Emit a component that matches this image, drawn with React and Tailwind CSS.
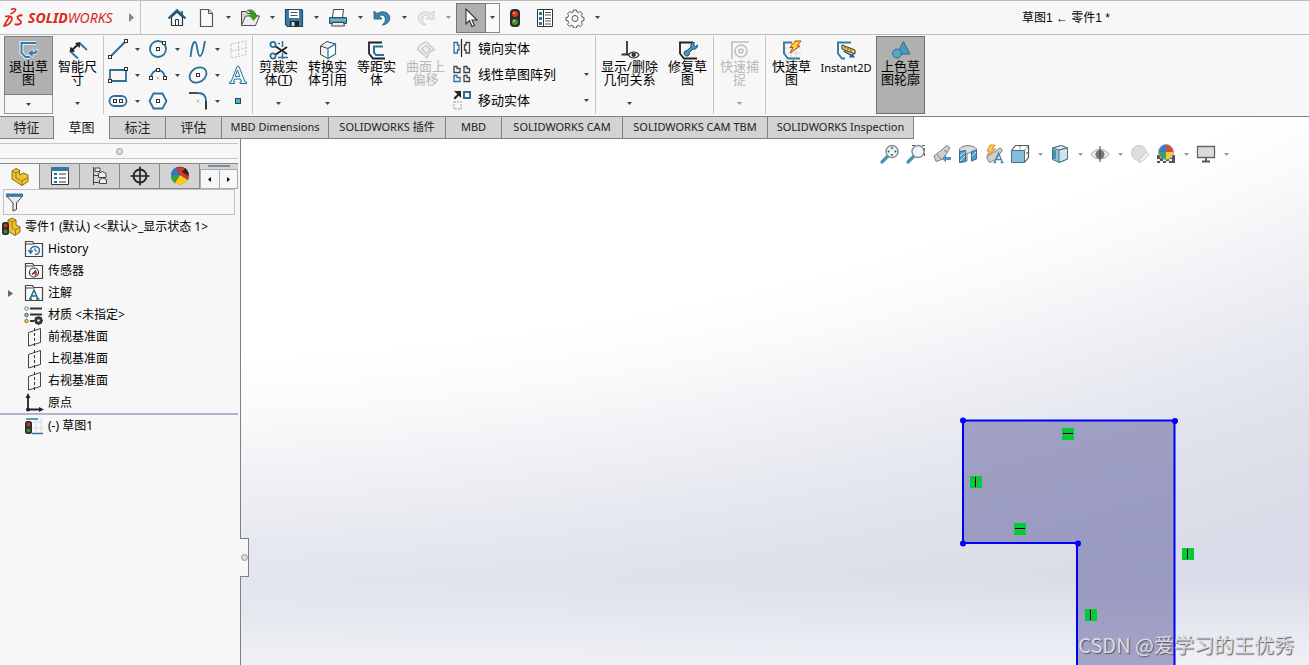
import React from "react";

const BLUE = "#2a7299";
const DARK = "#333333";

function Svg({ w = 20, h = 20, box, children, className = "" }) {
  return (
    <svg
      width={w}
      height={h}
      viewBox={box || `0 0 ${w} ${h}`}
      fill="none"
      aria-hidden="true"
      className={"block shrink-0 " + className}
    >
      {children}
    </svg>
  );
}

function Caret({ color = "#444" }) {
  return (
    <Svg w={5} h={3}>
      <path d="M0 0h5L2.5 3z" fill={color} />
    </Svg>
  );
}

/* small square grip drawn on sketch entities */
function Grip({ x, y }) {
  return <rect x={x - 1.5} y={y - 1.5} width="3" height="3" fill="#fff" stroke={DARK} />;
}

/* ---------- quick access icons ---------- */
const HomeIcon = () => (
  <Svg>
    <path d="M4.500 9v8.500h11V9L10 4z" fill="#f4f8fa" stroke={DARK} strokeWidth="1.200" />
    <path d="M14 3h2v4h-2z" fill={BLUE} />
    <path d="M1.500 10.500L10 2.500l8.500 8" stroke="#1f5f85" strokeWidth="2.400" />
    <path d="M8.500 11.500h3v6h-3z" fill="#fff" stroke={DARK} />
  </Svg>
);
const NewIcon = () => (
  <Svg>
    <path d="M4.500 1.500h8l4 4v13h-12z" fill="#fbfbfb" stroke="#555" strokeWidth="1.200" strokeLinejoin="round" />
    <path d="M12.500 1.500v4h4" fill="#ddd" stroke="#555" />
  </Svg>
);
const OpenIcon = () => (
  <Svg>
    <path d="M1.500 3.500h5l1 2h8v12h-14z" fill="#d8d8d8" stroke="#444" />
    <path d="M1.500 17.500l4-9.500h14l-4 9.500z" fill="#eee" stroke="#555" />
    <path d="M7 2.500c4-2 8 0 8.500 4.500H18l-4.500 5.500L9 7h2.500c-.5-2.500-2-3.500-4.500-4.500z" fill="#3c9a1b" stroke="#2a7a10" strokeWidth=".5" />
  </Svg>
);
const SaveIcon = () => (
  <Svg>
    <path d="M1.500 1.500h16l1 1v16h-15l-2-2z" fill="#3a7da3" stroke="#1d4c66" strokeWidth="1.200" />
    <path d="M5 2h10v8H5z" fill="#fff" />
    <path d="M6.500 4.500h7M6.500 7.500h7" stroke="#555" />
    <path d="M6 13h9v5.500H6z" fill="#222" />
    <path d="M7.500 14h3v4h-3z" fill="#cfe0ea" />
  </Svg>
);
const PrintIcon = () => (
  <Svg>
    <path d="M5.500 1.500h10l-1 8h-10z" fill="#fff" stroke="#444" />
    <path d="M1.500 9.500h17v6h-17z" fill="#4b91b6" stroke="#28546d" />
    <path d="M2 12h16" stroke="#a9cfe1" />
    <path d="M4.500 14.500h11l1 3.500h-13z" fill="#eee" stroke="#444" />
  </Svg>
);
const UndoIcon = () => (
  <Svg>
    <path d="M2 3v8h8L7.200 8C10 6 13.800 7.500 13.300 12c-.2 2-1.500 3.500-3 5 4.500-.5 7.200-3 7.500-6.500C18.300 5 11 1.500 5 5.500z" fill="#3b86ae" stroke="#1f5875" strokeWidth=".8" />
  </Svg>
);
const RedoIcon = () => (
  <Svg>
    <path d="M18 3v8h-8l2.800-3C10 6 6.200 7.500 6.700 12c.2 2 1.500 3.500 3 5-4.500-.5-7.200-3-7.500-6.500C1.700 5 9 1.500 15 5.500z" fill="#e8e8e8" stroke="#c4c4c4" strokeWidth=".8" />
  </Svg>
);
const CursorIcon = () => (
  <Svg>
    <path d="M5 1v15l3.500-3.500 2.500 6 2.500-1-2.500-5.500h5z" fill="#fff" stroke="#333" strokeWidth="1.100" />
  </Svg>
);
const TrafficIcon = () => (
  <Svg>
    <rect x="5" y="1" width="10" height="18" rx="4" fill="#2c2c2c" />
    <circle cx="10" cy="6" r="3" fill="#d63a22" />
    <circle cx="10" cy="14" r="3" fill="#3f9a28" />
    <circle cx="9" cy="5" r="1" fill="#ff9a80" />
    <circle cx="9" cy="13" r="1" fill="#9be080" />
  </Svg>
);
const OptionsIcon = () => (
  <Svg>
    <path d="M2.500 1.500h15v17h-15z" fill="#fff" stroke="#333" />
    <path d="M8.500 1.500v17" stroke="#333" />
    <path d="M4 4h3v3H4zM4 9h3v3H4zM4 14h3v3H4z" fill={BLUE} />
    <path d="M10 4.500h6M10 7h6M10 10.500h6M10 13h6M10 16h6" stroke="#555" />
  </Svg>
);
const GearIcon = () => (
  <Svg>
    <path
      d="M8.500 2h3l.4 2 1.700.7 1.700-1.200 2.200 2.200-1.200 1.700.7 1.700 2 .4v3l-2 .4-.7 1.700 1.200 1.700-2.200 2.200-1.700-1.200-1.700.7-.4 2h-3l-.4-2-1.700-.7-1.700 1.200-2.200-2.200 1.200-1.700-.7-1.700-2-.4v-3l2-.4.7-1.700-1.200-1.700 2.200-2.200 1.700 1.200 1.700-.7z"
      fill="#fafafa"
      stroke="#555"
      strokeLinejoin="round"
    />
    <circle cx="10" cy="10.500" r="3" stroke="#555" />
  </Svg>
);

/* ---------- ribbon icons ---------- */
const ExitSketchIcon = () => (
  <Svg>
    <path d="M17 3H2.500v10l4 4h4" stroke="#dff1fb" strokeWidth="4" />
    <path d="M17 3H2.500v10l4 4h4" stroke="#2f7ca5" strokeWidth="1.800" />
    <path d="M19 9.500c0 4-2 5-5 5v3L8.500 13 14 9v2.500c2 0 3-.5 3-2z" fill="#2f7ca5" stroke="#e8f6fc" strokeWidth=".8" />
  </Svg>
);
const SmartDimIcon = () => (
  <Svg>
    <path d="M3.500 10.500L10 4.500" stroke="#222" strokeWidth="2" />
    <path d="M1.500 12.500l1-6 4.500 5zM12.500 2l-1 6-4.500-5z" fill="#222" />
    <path d="M12 3.500l7 6.500M3 12l7 6.500" stroke={BLUE} strokeWidth="1.800" />
  </Svg>
);
const LineIcon = () => (
  <Svg>
    <path d="M2 18L18 2" stroke={BLUE} strokeWidth="2.200" />
    <Grip x={2} y={18} />
    <Grip x={18} y={2} />
  </Svg>
);
const CircleIcon = () => (
  <Svg>
    <circle cx="10" cy="10" r="8" stroke={BLUE} strokeWidth="1.800" />
    <Grip x={10} y={10} />
    <Grip x={16} y={4} />
  </Svg>
);
const SplineIcon = () => (
  <Svg>
    <path d="M2.500 18c1-8 2-15 4.500-15s2 14 5 14S15.500 8 17 2" stroke={BLUE} strokeWidth="1.800" />
  </Svg>
);
const PlaneIcon = () => (
  <Svg>
    <path d="M3 5l15-3v14L3 19zM10.500 3.500v14M3 12l15-3" stroke="#bdbdbd" strokeDasharray="2 1.500" />
  </Svg>
);
const RectIcon = () => (
  <Svg>
    <path d="M2 5h16v11H2z" stroke={BLUE} strokeWidth="1.800" />
    <Grip x={2} y={16} />
    <Grip x={18} y={4} />
  </Svg>
);
const ArcIcon = () => (
  <Svg>
    <path d="M3 13A7 8 0 0117 13" stroke={BLUE} strokeWidth="1.800" />
    <path d="M8.500 11.500l3 3M11.500 11.500l-3 3" stroke="#bbb" />
    <Grip x={3} y={13} />
    <Grip x={17} y={13} />
    <Grip x={10} y={5} />
  </Svg>
);
const EllipseIcon = () => (
  <Svg>
    <ellipse cx="10" cy="10" rx="9" ry="7" transform="rotate(-35 10 10)" stroke={BLUE} strokeWidth="1.800" />
    <Grip x={10} y={10} />
  </Svg>
);
const TextToolIcon = () => (
  <Svg>
    <path d="M1.500 18.500h5v-1.500H5.500l1-3h6l1 3H12v1.500h6.500V17h-1.500L11 1.500H9L3 17H1.500zM7.200 11.500L9.500 5l2.300 6.500z" fill="#f2f8fb" stroke={BLUE} strokeWidth="1" />
  </Svg>
);
const SlotIcon = () => (
  <Svg>
    <rect x="1.500" y="5" width="17" height="10" rx="5" stroke={BLUE} strokeWidth="1.800" />
    <Grip x={7} y={10} />
    <Grip x={13} y={10} />
  </Svg>
);
const PolygonIcon = () => (
  <Svg>
    <path d="M5.500 2.500h9L18.500 10l-4 7.500h-9L1.500 10z" stroke={BLUE} strokeWidth="1.800" />
    <Grip x={10} y={10} />
  </Svg>
);
const FilletIcon = () => (
  <Svg>
    <path d="M1 2h9" stroke="#222" strokeWidth="1.600" />
    <path d="M10 2c5 0 8 3 8 8" stroke={BLUE} strokeWidth="1.800" />
    <path d="M18 10v8.500" stroke="#222" strokeWidth="1.800" />
    <path d="M8.500 8.500l3 3M11.500 8.500l-3 3" stroke="#bbb" />
  </Svg>
);
const PointIcon = () => (
  <Svg>
    <rect x="7.500" y="7.500" width="5" height="5" fill="#5aa9d0" stroke="#1d4c66" />
  </Svg>
);
const TrimIcon = () => (
  <Svg>
    <path d="M6 6l12 8M6 15L18 7" stroke="#222" strokeWidth="2" />
    <circle cx="4" cy="4.500" r="2.600" stroke={BLUE} strokeWidth="1.800" />
    <circle cx="4" cy="16" r="2.600" stroke={BLUE} strokeWidth="1.800" />
    <path d="M13.500 1v6M13.500 13v6M9 17.500h10M9 3.500h2" stroke={BLUE} strokeWidth="1.600" />
  </Svg>
);
const ConvertIcon = () => (
  <Svg>
    <path d="M2.500 6L9 1.500 17.500 4v10L10 18.500l-7.500-4z" fill="#f2f2f2" stroke="#444" />
    <path d="M2.500 6L10 8.500 17.500 4" stroke="#444" />
    <path d="M10 8.500v10l7.500-4.500V4z" fill="#fff" stroke={BLUE} strokeWidth="1.200" />
  </Svg>
);
const OffsetIcon = () => (
  <Svg>
    <path d="M15 2.500H2v11l4 5h12" stroke="#222" strokeWidth="1.800" />
    <path d="M16 6.500H7v6l2 2.500h8" stroke={BLUE} strokeWidth="2" />
  </Svg>
);
const SurfaceOffsetIcon = () => (
  <Svg>
    <path d="M1.500 9C4 4 8 2 11 2l7.500 8c-4 1-6 3.500-7.500 8z" fill="#ededed" stroke="#c6c6c6" strokeWidth="1.200" />
    <path d="M6 9c1-2 2.500-3 4.500-3.500L14.500 10c-2 .6-3 1.800-4 4z" stroke="#c6c6c6" strokeWidth="1.200" />
  </Svg>
);
const MirrorIcon = () => (
  <Svg>
    <path d="M2 4.500h3.500v2.500H7v5H5.500v3H2z" stroke={BLUE} strokeWidth="1.300" />
    <path d="M9.500 1v18" stroke="#222" strokeWidth="1.200" />
    <path d="M17.500 4.500H14v2.500h-1.500v5H14v3h3.500z" stroke="#444" strokeWidth="1.300" />
  </Svg>
);
const PatternIcon = () => (
  <Svg>
    <path d="M2 2.500h3v2h3v4H2z" stroke="#444" strokeWidth="1.300" />
    <path d="M12 2.500h3v2h2.500v4H12z" stroke="#444" strokeWidth="1.300" />
    <path d="M2 11.500h3v2h3v4H2z" stroke={BLUE} strokeWidth="1.300" />
    <path d="M12 11.500h3v2h2.500v4H12z" stroke="#444" strokeWidth="1.300" />
  </Svg>
);
const MoveIcon = () => (
  <Svg>
    <path d="M2 1h7v7L6.800 5.800 3 9.500 1.500 8l3.800-3.700z" fill="#222" />
    <rect x="12" y="2" width="6" height="6" stroke={BLUE} strokeWidth="2" />
    <path d="M2 12h7v7H2z" stroke="#bbb" strokeWidth="1.500" strokeDasharray="2 1" />
  </Svg>
);
const RelationsIcon = () => (
  <Svg>
    <path d="M7 1v13M1.500 14.500H10" stroke="#333" strokeWidth="1.800" />
    <path d="M8.500 15c2.500-4 8-4 10.500 0-2.500 4-8 4-10.500 0z" fill="#fff" stroke="#333" strokeWidth="1.200" />
    <circle cx="13.700" cy="14.800" r="2.200" fill="#333" />
  </Svg>
);
const RepairIcon = () => (
  <Svg>
    <path d="M15 2.500H2v11l4 5h13" stroke="#222" strokeWidth="1.800" />
    <path d="M6.500 11.500c-1 2.500 0 4.500 2 4.500s3.500-1.500 2.800-3.500l3.700-3.500c2 .7 4.500-.5 4.500-4l-2 1.500L15.500 5l1-2.500c-2.500 0-4.500 2-3.500 4.500l-4 3.500z" fill="#4a97bf" stroke="#1d4c66" />
  </Svg>
);
const SnapIcon = () => (
  <Svg>
    <path d="M19 2H2v17" stroke="#c0c0c0" strokeWidth="1.600" />
    <circle cx="11" cy="11" r="6" stroke="#c0c0c0" strokeWidth="1.600" />
    <circle cx="11" cy="11" r="2" stroke="#c0c0c0" strokeWidth="1.600" />
  </Svg>
);
const RapidIcon = () => (
  <Svg>
    <path d="M9 2v17M14 2v17M2 8h17M2 13h17" stroke="#d5d5d5" />
    <path d="M10 2.500H2v11l4 5h12" stroke="#2f7ca5" strokeWidth="1.900" />
    <path d="M13 1h6l-4 5h3L8 13l3-5.500H8z" fill="#ffd23a" stroke="#b5471a" />
  </Svg>
);
const InstantIcon = () => (
  <Svg>
    <path d="M15 2.500H2v11l4 5h3" stroke="#2f7ca5" strokeWidth="1.900" />
    <path d="M6 5l13 5v4L6 9z" fill="#ffd23a" stroke="#333" />
    <path d="M9 6.500v2M12 8v2M15 9.500v2" stroke="#333" />
    <path d="M7 11.500l7 4-1 2h6L16.500 13l-1 1.500-7-4z" fill="#2b5f7c" />
  </Svg>
);
const ShadedIcon = () => (
  <Svg>
    <path d="M12.500 1.500L19 14H6z" fill="#4f97bb" stroke="#2d6c8d" />
    <circle cx="6" cy="13.500" r="4.500" fill="#5ca3c6" stroke="#2d6c8d" />
  </Svg>
);

/* ---------- view toolbar icons ---------- */
const Lens = ({ children }) => (
  <>
    <path d="M2 18l6-6" stroke="#4d8fb3" strokeWidth="3.200" strokeLinecap="round" />
    <circle cx="12" cy="7.500" r="6" fill="#eef5f9" stroke="#8a8f93" strokeWidth="1.500" />
    {children}
  </>
);
const ZoomFitIcon = () => (
  <Svg>
    <Lens>
      <path d="M12 2.800l1.600 2h-3.200zM12 12.200l1.600-2h-3.200zM7.300 7.500l2-1.600v3.200zM16.700 7.500l-2-1.600v3.200z" fill="#444" />
    </Lens>
  </Svg>
);
const ZoomAreaIcon = () => (
  <Svg>
    <path d="M6 1.500h12.500V14" stroke="#555" strokeDasharray="3 2" />
    <Lens />
  </Svg>
);
const PrevViewIcon = () => (
  <Svg>
    <path d="M15 1.500l3 2.500-7 11-7 2.500L2 12z" fill="#cfcfcf" stroke="#808080" />
    <path d="M12 6l3.500 2.500M5 10l4 5" stroke="#808080" />
    <path d="M10 14.500l4-4v2.500h5v3h-5v2.500z" fill="#4d96bd" />
  </Svg>
);
const SectionIcon = () => (
  <Svg>
    <path d="M1.500 5c3-4.500 14-4.500 17 0v9l-5 3V9.500c-1.500-1-3-1-4.500 0V17l-7.500 1.500z" fill="#d9dcde" stroke="#777" />
    <path d="M1.500 7.500l6-1v11l-6 1zM13.500 7.500l5-1.500v9l-5 2z" fill="#4f9cc4" stroke="#376e8b" />
    <path d="M2 12l5-4M2 17l5-5M14 12l4-4" stroke="#d3ebf6" />
  </Svg>
);
const DynamicAnnotIcon = () => (
  <Svg>
    <path d="M16 4l2.500 2-6 9-7 3.500L2.500 13z" fill="#cfcfcf" stroke="#808080" />
    <path d="M6 1h5L8.500 5h3L3 12l2.500-5H3z" fill="#ffca4f" stroke="#c77a2a" strokeWidth=".8" />
    <path d="M10.500 18.500L14.500 9l4 9.500M12 15.500h5M9.500 18.500h2.500M16.500 18.500h3" stroke="#4287aa" strokeWidth="1.300" />
  </Svg>
);
const OrientationIcon = () => (
  <Svg>
    <path d="M1.500 6.500l4-5h13v12l-4 5" fill="#fff" stroke="#555" strokeWidth="1.200" />
    <path d="M14.500 6.500l4-5M10 1.500v4M18 9h-3" stroke="#555" strokeDasharray="2 1" />
    <path d="M1.500 6.500h13v12h-13z" fill="#84bcd9" stroke="#3b7594" />
  </Svg>
);
const DisplayStyleIcon = () => (
  <Svg>
    <path d="M2.500 4l9-2.500 6 2.500v11l-8 3.500-7-3z" fill="#8fc4dd" stroke="#4b7184" />
    <path d="M2.500 4L9 6l8.500-2-6-2.500z" fill="#dceef6" stroke="#4b7184" />
    <path d="M9 6v12.500l8.500-3.500V4z" fill="#cfe4ee" stroke="#4b7184" />
    <path d="M4.500 6v9" stroke="#4992b7" strokeWidth="3" />
  </Svg>
);
const HideShowIcon = () => (
  <Svg>
    <path d="M1 10.500c4-7 14-7 18 0-4 6-14 6-18 0z" fill="#eee" stroke="#aaa" />
    <circle cx="10" cy="10.500" r="4.500" fill="#777" />
    <path d="M10 2v16" stroke="#444" />
  </Svg>
);
const AppearanceIcon = () => (
  <Svg>
    <circle cx="9" cy="9" r="7.500" fill="#dedede" stroke="#ccc" />
    <path d="M16.500 8l2.500 2.500-7 7-3 .8.700-3z" fill="#f3f3f3" stroke="#c0c0c0" />
  </Svg>
);
const SceneIcon = () => (
  <Svg>
    <path d="M1 11h18v8H1z" fill="#555" />
    <path d="M4 12h3v2H4zM13 12h3v2h-3zM1 15h3v2H1zM7 15h3v2H7zM13 15h3v2h-3zM4 17h3v2H4zM10 17h3v2h-3z" fill="#f0f0f0" />
    <path d="M10 8V.5A7.500 7.500 0 002.500 8z" fill="#3d74d6" />
    <path d="M10 8V.5A7.500 7.500 0 0117.500 8z" fill="#d84a3b" />
    <path d="M10 8v7.500A7.500 7.500 0 012.500 8z" fill="#3ba553" />
    <path d="M10 8v7.500A7.500 7.500 0 0017.500 8z" fill="#f0cf3c" />
    <circle cx="10" cy="8" r="7.500" stroke="#999" strokeWidth=".8" />
  </Svg>
);
const MonitorIcon = () => (
  <Svg>
    <path d="M1.500 2.500h17v11h-17z" fill="#d9dcdf" stroke="#666" strokeWidth="1.300" />
    <path d="M10 14v4M6 17.500h8" stroke="#555" strokeWidth="1.800" />
  </Svg>
);

/* ---------- side panel icons ---------- */
const PartIcon = () => (
  <Svg>
    <path d="M2 4l4-2.500L9.500 3v5l4-2 4.500 2v6.500L12 18.500 2 12z" fill="#ecc22f" stroke="#8d6a10" />
    <path d="M2 4l4 2v5l6 3 6-3.500M6 6l3.500-2M12 14v4.500" stroke="#8d6a10" strokeWidth=".8" />
  </Svg>
);
const PropertyIcon = () => (
  <Svg>
    <path d="M1.500 2.500h17v16h-17z" fill="#fff" stroke="#333" />
    <path d="M1 1h18v4H1z" fill="#2f7ca5" />
    <path d="M4 7h3v2H4zM4 11h3v2H4zM4 15h3v2H4z" fill={BLUE} />
    <path d="M9 8h7M9 12h7M9 16h7" stroke="#333" />
  </Svg>
);
const ConfigIcon = () => (
  <Svg>
    <path d="M3.500 1v18M3.500 9.500h6M3.500 16.500h6" stroke="#444" />
    <path d="M5 2h5v3.500H5zM8.500 7.500l4-2 3.500 2v4h-7.500zM9.500 14l3-2 4 1.500v4H9.500z" fill="#eee" stroke="#444" />
  </Svg>
);
const TargetIcon = () => (
  <Svg>
    <circle cx="10" cy="10" r="6.500" stroke="#222" strokeWidth="1.800" />
    <path d="M10 .5v19M.5 10h19" stroke="#222" strokeWidth="1.600" />
  </Svg>
);
const BallIcon = () => (
  <Svg>
    <circle cx="10" cy="9.500" r="9" fill="#444" />
    <path d="M10 9L6 1.500A9 9 0 001 9z" fill="#3575d5" />
    <path d="M10 9L1 9a9 9 0 004 8z" fill="#3d9f3c" />
    <path d="M10 9L5 17c4 3 10 2 13-3z" fill="#f2cc25" />
    <path d="M10 9l8.500 4.500C20 8 16 3 12 1L6 1.500z" fill="#d23a28" />
    <path d="M12 6l3-4c3 2 4 5 3.500 8z" fill="#33261f" />
  </Svg>
);
const FilterIcon = () => (
  <Svg>
    <path d="M1.500 4h16L11.500 11v6.500L8 19v-8z" fill="#e9e9e9" stroke="#444" />
    <path d="M1 1.500h17v3H1z" fill="#2f7ca5" />
  </Svg>
);
const RootPartIcon = () => (
  <Svg>
    <path d="M7 3l4-2 4 2v5l4 2v5l-5 3.500L7 14z" fill="#ecc22f" stroke="#8d6a10" />
    <path d="M7 3l4 2v6l3.500 2 4.500-3M11 5l4-2M14.500 13v5" stroke="#8d6a10" strokeWidth=".8" />
    <rect x="1" y="5" width="7" height="13" rx="2.500" fill="#2c2c2c" />
    <circle cx="4.500" cy="8.500" r="2" fill="#c8362a" />
    <circle cx="4.500" cy="14.500" r="2" fill="#3f8a30" />
  </Svg>
);
const Folder = ({ children }) => (
  <Svg>
    <path d="M1.500 17.500v-15h7l1.500 2h8.500v13z" fill="#fafafa" stroke="#444" strokeWidth="1.200" />
    <path d="M1.500 5h9" stroke="#444" />
    {children}
  </Svg>
);
const HistoryIcon = () => (
  <Folder>
    <path d="M6.500 11.500a4.500 4 0 114.500 4" stroke={BLUE} strokeWidth="1.500" />
    <path d="M3.500 11l3 4.500 3-4z" fill={BLUE} />
    <path d="M11 9v3h2.500" stroke={BLUE} />
  </Folder>
);
const SensorIcon = () => (
  <Folder>
    <circle cx="10" cy="11.500" r="4.500" fill="#fff" stroke="#333" strokeWidth="1.200" />
    <path d="M10 11.500l3-1v3l-2 2z" fill="#d8402f" />
    <path d="M8 13.500l4-4" stroke="#333" strokeWidth="1.400" />
  </Folder>
);
const AnnotationIcon = () => (
  <Folder>
    <path d="M6 16l4-9 4 9M7.500 13h5M5 16h3M12 16h3.500" stroke="#24688d" strokeWidth="1.500" />
  </Folder>
);
const MaterialIcon = () => (
  <Svg>
    <circle cx="2.500" cy="3.500" r="1.800" fill="#eee" stroke="#666" strokeWidth=".8" />
    <circle cx="2.500" cy="10" r="1.800" fill="#6cc0ea" stroke="#356" strokeWidth=".8" />
    <circle cx="2.500" cy="16" r="1.800" fill="#f0c020" stroke="#863" strokeWidth=".8" />
    <path d="M6 3.500h12M6 9.500h12M6 16h4" stroke="#333" strokeWidth="1.800" />
    <circle cx="14.500" cy="15.500" r="3" stroke="#333" strokeWidth="2.200" />
    <path d="M14.500 11v9M10 15.500h9M11.500 12.500l6 6M17.500 12.500l-6 6" stroke="#333" strokeWidth="1.200" />
    <circle cx="14.500" cy="15.500" r="1.200" fill="#f6f6f6" />
  </Svg>
);
const RefPlaneIcon = () => (
  <Svg>
    <path d="M4.500 5.500l12-4v14l-12 3.500z" stroke="#444" />
    <path d="M10.500 1v18" stroke="#333" strokeDasharray="3 2" />
  </Svg>
);
const OriginIcon = () => (
  <Svg>
    <path d="M4 4v12.500h12" stroke="#222" strokeWidth="1.800" />
    <path d="M4 0l2.500 5h-5zM20 16.500L15 14v5z" fill="#222" />
    <circle cx="4" cy="16.500" r="2" fill="#222" />
  </Svg>
);
const SketchNodeIcon = () => (
  <Svg>
    <path d="M8 6h11M8 12h11M12 2v15M17 2v15" stroke="#d8dde0" />
    <path d="M2 3h12M8 17.500h11" stroke="#2f7ca5" strokeWidth="1.600" />
    <rect x="1" y="5" width="7" height="13" rx="2.500" fill="#2c2c2c" />
    <circle cx="4.500" cy="8.500" r="2" fill="#c8362a" />
    <circle cx="4.500" cy="14.500" r="2" fill="#3f8a30" />
  </Svg>
);

/* ---------- title bar ---------- */
const quickTools = [
  ["新建", NewIcon],
  ["打开", OpenIcon],
  ["保存", SaveIcon],
  ["打印", PrintIcon],
  ["撤销", UndoIcon],
  ["重做", RedoIcon, true],
];

function TitleBar() {
  return (
    <header className="flex h-[35px] items-center border-y border-[#bdbdbd]">
      <div className="flex h-full w-[141px] items-center border-r border-[#c4c4c4] pl-[3px]">
        <Svg w={22} h={22}>
          <path d="M8 2.500c3-1.500 6-.5 4 1.500C11 5 9 6.500 7.500 7" stroke="#da291c" strokeWidth="1.600" />
          <path d="M2 9.500c5-1 8 0 6.500 4C7.500 16.500 4 19 1 19c2-4 4-7 6-10" stroke="#da291c" strokeWidth="1.700" />
          <path d="M19.500 8.500c-3-.7-5.500.8-5 2.500.5 1.500 4 2 3.500 4.500-.4 1.800-3.500 2.500-6.500 1.700" stroke="#da291c" strokeWidth="1.900" />
        </Svg>
        <span className="ml-[3px] text-[14px] leading-4 text-[#da291c] italic">
          <b className="font-bold">SOLID</b>WORKS
        </span>
        <button aria-label="展开菜单" className="mr-1.5 ml-auto flex">
          <Svg w={6} h={9}>
            <path d="M1 0l5 4.500L1 9z" fill="#888" />
          </Svg>
        </button>
      </div>
      <nav aria-label="快速访问" className="ml-[22px] flex h-full items-center">
        <button aria-label="主页" className="mr-px flex w-7 justify-center">
          <HomeIcon />
        </button>
        {quickTools.map(([label, Icon, dim]) => (
          <div key={label} className="flex items-center">
            <button aria-label={label} className="flex w-7 justify-center">
              <Icon />
            </button>
            <button aria-label={label + "选项"} className="flex w-4 justify-center py-2">
              <Caret color={dim ? "#999" : "#444"} />
            </button>
          </div>
        ))}
        <button aria-label="选择" className="flex h-[30px] w-[30px] items-center justify-center border border-[#777] bg-[#b0b0b0]">
          <CursorIcon />
        </button>
        <button aria-label="选择选项" className="flex h-[30px] w-[14px] items-center justify-center border border-l-0 border-[#888] bg-[#fafafa]">
          <Caret />
        </button>
        <button aria-label="重建模型" className="flex w-[30px] justify-center">
          <TrafficIcon />
        </button>
        <button aria-label="文件属性" className="flex w-[30px] justify-center">
          <OptionsIcon />
        </button>
        <button aria-label="选项" className="flex w-[30px] justify-center">
          <GearIcon />
        </button>
        <button aria-label="更多选项" className="flex w-[14px] justify-center py-2">
          <Caret />
        </button>
      </nav>
      <h1 className="mr-[199px] ml-auto font-['Liberation_Sans','Noto_Sans_CJK_SC',sans-serif] text-[12px] leading-4 whitespace-nowrap">
        草图1 ← 零件1 *
      </h1>
    </header>
  );
}

/* ---------- ribbon ---------- */
function Tool({ icon: Icon, name, children, drop, active, disabled, wide, full }) {
  const tone = disabled ? "text-[#b8b8b8]" : "text-black";
  const main = active
    ? full
      ? "h-[78px] border border-[#6f6f6f] bg-[#b0b0b0]"
      : "h-[59px] border border-[#808080] bg-[#b0b0b0]"
    : "h-[59px] border border-transparent";
  return (
    <div className={"flex shrink-0 flex-col " + (wide ? "w-[67px]" : "w-[49px]")}>
      <button
        disabled={disabled}
        className={"flex flex-col items-center pt-[3px] text-[13px] leading-[13px] whitespace-nowrap " + main + " " + tone}
      >
        <Icon />
        <span>{children}</span>
      </button>
      {drop && (
        <button
          disabled={disabled}
          aria-label={name + "选项"}
          className={"flex h-[19px] items-center justify-center " + (active ? "border border-t-0 border-[#999]" : "pb-0.5")}
        >
          <Caret color={disabled ? "#999" : "#444"} />
        </button>
      )}
    </div>
  );
}

function Divider() {
  return <div className="h-[78px] w-px shrink-0 bg-[#c4c4c4]" />;
}

const entityTools = [
  ["直线", LineIcon, true],
  ["圆", CircleIcon, true],
  ["样条曲线", SplineIcon, true],
  ["基准面", PlaneIcon, false],
  ["边角矩形", RectIcon, true],
  ["圆弧", ArcIcon, true],
  ["椭圆", EllipseIcon, true],
  ["文本", TextToolIcon, false],
  ["直槽口", SlotIcon, true],
  ["多边形", PolygonIcon, false],
  ["绘制圆角", FilletIcon, true],
  ["点", PointIcon, false],
];

const listTools = [
  ["镜向实体", MirrorIcon, false],
  ["线性草图阵列", PatternIcon, true],
  ["移动实体", MoveIcon, true],
];

function Ribbon() {
  return (
    <section aria-label="草图工具" className="flex h-[82px] items-start border-b border-[#808080] pt-px pl-1">
      <Tool icon={ExitSketchIcon} name="退出草图" drop active>
        退出草
        <br />图
      </Tool>
      <Tool icon={SmartDimIcon} name="智能尺寸" drop>
        智能尺
        <br />寸
      </Tool>
      <div className="w-px shrink-0" />
      <Divider />
      <div className="grid w-[148px] shrink-0 grid-cols-[40px_40px_40px_24px] pl-0.5">
        {entityTools.map(([label, Icon, drop]) => (
          <div key={label} className="flex h-[26px] items-center">
            <button aria-label={label} className="flex w-6 justify-center">
              <Icon />
            </button>
            {drop && (
              <button aria-label={label + "选项"} className="flex w-[14px] justify-center py-2">
                <Caret />
              </button>
            )}
          </div>
        ))}
      </div>
      <Divider />
      <div className="w-px shrink-0" />
      <Tool icon={TrimIcon} name="剪裁实体" drop>
        剪裁实
        <br />
        体(<u>T</u>)
      </Tool>
      <Tool icon={ConvertIcon} name="转换实体引用" drop>
        转换实
        <br />
        体引用
      </Tool>
      <Tool icon={OffsetIcon} name="等距实体">
        等距实
        <br />体
      </Tool>
      <Tool icon={SurfaceOffsetIcon} name="曲面上偏移" disabled>
        曲面上
        <br />
        偏移
      </Tool>
      <ul className="flex w-[145px] shrink-0 flex-col pr-[6px]">
        {listTools.map(([label, Icon, drop]) => (
          <li key={label} className="flex h-[26px] items-center justify-between pb-0.5">
            <button className="flex items-center gap-[6px] pl-0.5 text-[13px] leading-4">
              <Icon />
              {label}
            </button>
            {drop && (
              <button aria-label={label + "选项"} className="flex py-2">
                <Caret />
              </button>
            )}
          </li>
        ))}
      </ul>
      <Divider />
      <Tool icon={RelationsIcon} name="显示/删除几何关系" drop wide>
        显示/删除
        <br />
        几何关系
      </Tool>
      <Tool icon={RepairIcon} name="修复草图">
        修复草
        <br />图
      </Tool>
      <div className="w-px shrink-0" />
      <Divider />
      <div className="w-px shrink-0" />
      <Tool icon={SnapIcon} name="快速捕捉" drop disabled>
        快速捕
        <br />捉
      </Tool>
      <div className="w-px shrink-0" />
      <Divider />
      <div className="w-px shrink-0" />
      <Tool icon={RapidIcon} name="快速草图">
        快速草
        <br />图
      </Tool>
      <div className="flex w-[60px] shrink-0 justify-center">
        <button className="flex h-[59px] flex-col items-center gap-px pt-1 text-[11px] leading-[13px]">
          <InstantIcon />
          Instant2D
        </button>
      </div>
      <Tool icon={ShadedIcon} name="上色草图轮廓" active full>
        上色草
        <br />
        图轮廓
      </Tool>
    </section>
  );
}

/* ---------- command tabs ---------- */
const tabs = [
  ["特征", "w-[54px]"],
  ["草图", "w-[56px]"],
  ["标注", "w-[56px]"],
  ["评估", "w-[56px]"],
  ["MBD Dimensions", "w-[107px]"],
  ["SOLIDWORKS 插件", "w-[117px]"],
  ["MBD", "w-[56px]"],
  ["SOLIDWORKS CAM", "w-[121px]"],
  ["SOLIDWORKS CAM TBM", "w-[145px]"],
  ["SOLIDWORKS Inspection", "w-[146px]"],
];

function CommandTabs() {
  return (
    <div role="tablist" className="-mt-px flex h-[23px]">
      {tabs.map(([label, width]) => {
        const on = label === "草图";
        const latin = /[A-Z]/.test(label);
        return (
          <button
            key={label}
            role="tab"
            aria-selected={on}
            className={
              "shrink-0 border-[#808080] whitespace-nowrap " +
              width +
              (latin ? " text-[11px]" : " text-[13px]") +
              (on ? " border-r bg-[#f7f7f7] text-[#222]" : " border-y border-r bg-[#d3d3d3] text-[#222]")
            }
          >
            {label}
          </button>
        );
      })}
    </div>
  );
}

/* ---------- feature manager ---------- */
const panelTabs = [
  ["特征管理器", PartIcon],
  ["属性管理器", PropertyIcon],
  ["配置管理器", ConfigIcon],
  ["尺寸专家", TargetIcon],
  ["外观管理器", BallIcon],
];

const tree = [
  ["History", HistoryIcon],
  ["传感器", SensorIcon],
  ["注解", AnnotationIcon, true],
  ["材质 <未指定>", MaterialIcon],
  ["前视基准面", RefPlaneIcon],
  ["上视基准面", RefPlaneIcon],
  ["右视基准面", RefPlaneIcon],
  ["原点", OriginIcon],
];

function TreeRow({ label, Icon, open }) {
  return (
    <li className="flex h-[22px] items-center pl-[5px]">
      <span className="flex w-[19px] pl-[3px]">
        {open && (
          <Svg w={5} h={7}>
            <path d="M0 0l5 3.500L0 7z" fill="#666" />
          </Svg>
        )}
      </span>
      <Icon />
      <span className="ml-1 whitespace-nowrap">{label}</span>
    </li>
  );
}

function Sidebar() {
  return (
    <aside className="relative w-[241px] shrink-0 border-r border-[#808080] bg-[#f7f7f7] pr-[2px]">
      <div className="mt-1 flex h-4 items-center justify-center border-y border-[#c4c4c4]">
        <span className="h-[7px] w-[7px] rounded-full border border-[#999] bg-[#ddd]" />
      </div>
      <div role="tablist" className="mt-1 flex h-[26px] border-t border-[#888]">
        {panelTabs.map(([label, Icon], i) => (
          <button
            key={label}
            role="tab"
            aria-label={label}
            aria-selected={i === 0}
            className={
              "flex w-10 items-center justify-center border-r border-[#888] " +
              (i === 0 ? "bg-[#f7f7f7]" : "border-b bg-[#d3d3d3]")
            }
          >
            <Icon />
          </button>
        ))}
        <div className="flex flex-1 flex-col bg-[#d3d3d3]">
          <div className="mx-2 mt-px h-1 border-t-2 border-[#7b8da0]" />
          <div className="flex flex-1">
            <button aria-label="向左滚动" className="flex flex-1 items-center justify-center border border-[#aaa] bg-[#f7f7f7]">
              <Svg w={3} h={5}>
                <path d="M3 0v5L0 2.500z" fill="#000" />
              </Svg>
            </button>
            <button aria-label="向右滚动" className="flex flex-1 items-center justify-center border border-l-0 border-[#aaa] bg-[#f7f7f7]">
              <Svg w={3} h={5}>
                <path d="M0 0v5l3-2.500z" fill="#000" />
              </Svg>
            </button>
          </div>
        </div>
      </div>
      <label className="mr-[3px] ml-[3px] flex h-[26px] items-center border border-[#c0c0c0] pl-px">
        <FilterIcon />
        <input aria-label="筛选" className="ml-1 w-full min-w-0 bg-transparent text-xs outline-none" />
      </label>
      <div className="mt-px text-xs">
        <div className="flex h-[22px] items-center pl-px">
          <RootPartIcon />
          <span className="ml-1 whitespace-nowrap">零件1 (默认) &lt;&lt;默认&gt;_显示状态 1&gt;</span>
        </div>
        <ul>
          {tree.map(([label, Icon, open]) => (
            <TreeRow key={label} label={label} Icon={Icon} open={open} />
          ))}
        </ul>
        <div className="-mt-px h-[2px] bg-[#b3b3cd]" />
        <ul>
          <TreeRow label="(-) 草图1" Icon={SketchNodeIcon} />
        </ul>
      </div>
      <button
        aria-label="折叠面板"
        className="absolute top-[399px] -right-[9px] flex h-[39px] w-[9px] items-center justify-center border border-l-0 border-[#808080] bg-[#f7f7f7]"
      >
        <span className="h-[7px] w-[7px] shrink-0 rounded-full border border-[#999] bg-[#ddd]" />
      </button>
    </aside>
  );
}

/* ---------- graphics area ---------- */
const viewTools = [
  ["整屏显示全图", ZoomFitIcon],
  ["局部放大", ZoomAreaIcon],
  ["上一视图", PrevViewIcon],
  ["剖面视图", SectionIcon],
  ["动态注解视图", DynamicAnnotIcon],
  ["视图定向", OrientationIcon, true],
  ["显示样式", DisplayStyleIcon, true],
  ["隐藏/显示项目", HideShowIcon, true],
  ["编辑外观", AppearanceIcon],
  ["应用布景", SceneIcon, true],
  ["视图设定", MonitorIcon, true],
];

function Relation({ x, y, vertical }) {
  return (
    <g>
      <rect x={x} y={y} width="12" height="12" fill="#00cc33" />
      {vertical ? (
        <>
          <path d={`M${x + 5.5} ${y + 1}v10`} stroke="#000" />
          <path d={`M${x + 6.5} ${y + 1}v10`} stroke="#7d8f7d" />
        </>
      ) : (
        <>
          <path d={`M${x + 1} ${y + 5.5}h10`} stroke="#000" />
          <path d={`M${x + 1} ${y + 6.5}h10`} stroke="#7d8f7d" />
        </>
      )}
    </g>
  );
}

function Sketch() {
  return (
    <svg
      width="245"
      height="400"
      viewBox="956 414 245 400"
      fill="none"
      role="img"
      aria-label="草图轮廓"
      className="absolute top-[275px] left-[715px]"
    >
      <path d="M963 421H1174V813H1077V543H963z" fill="#5a579a" fillOpacity=".5" />
      <path d="M963 543V420.500H1174.500V813M1077 813V543H963" stroke="#0000f5" strokeWidth="2" />
      {[[963, 420.5], [1175, 421], [963, 543.5], [1078, 543.5]].map(([x, y]) => (
        <circle key={x + "-" + y} cx={x} cy={y} r="3" fill="#0000ff" />
      ))}
      <Relation x={1062} y={428} />
      <Relation x={970} y={476} vertical />
      <Relation x={1014} y={523} />
      <Relation x={1182} y={548} vertical />
      <Relation x={1085} y={609} vertical />
    </svg>
  );
}

function Viewport() {
  return (
    <main className="relative min-w-0 flex-1 overflow-hidden">
      <div className="flex h-[30px] items-center justify-end pr-[76px]">
        {viewTools.map(([label, Icon, drop]) => (
          <div key={label} className="flex items-center">
            <button aria-label={label} className="flex w-[26px] justify-center">
              <Icon />
            </button>
            {drop && (
              <button aria-label={label + "选项"} className="flex w-[14px] justify-center py-2">
                <Caret color="#999" />
              </button>
            )}
          </div>
        ))}
      </div>
      <Sketch />
      <p className="absolute right-[15px] bottom-[6px] font-['Noto_Sans_CJK_SC',sans-serif] text-[20px] leading-7 whitespace-nowrap text-[#dcdce4] [text-shadow:1px_1px_1px_#555]">
        CSDN @爱学习的王优秀
      </p>
    </main>
  );
}

export default function App() {
  return (
    <div
      lang="zh-CN"
      className="flex min-h-screen flex-col bg-[#f7f7f7] font-['Noto_Sans','Noto_Sans_CJK_SC',sans-serif] text-black"
    >
      <TitleBar />
      <Ribbon />
      <div className="flex flex-1 flex-col bg-[linear-gradient(to_bottom,transparent_84%,rgba(245,246,250,0.8)_100%),radial-gradient(2160px_1200px_at_100px_-717px,#ffffff_80%,#fbfbfd_84%,#edeef2_92%,#e5e8f0_96%,#dfe2ea_101%,#d9dce8_109%)]">
        <CommandTabs />
        <div className="flex flex-1">
          <Sidebar />
          <Viewport />
        </div>
      </div>
    </div>
  );
}
